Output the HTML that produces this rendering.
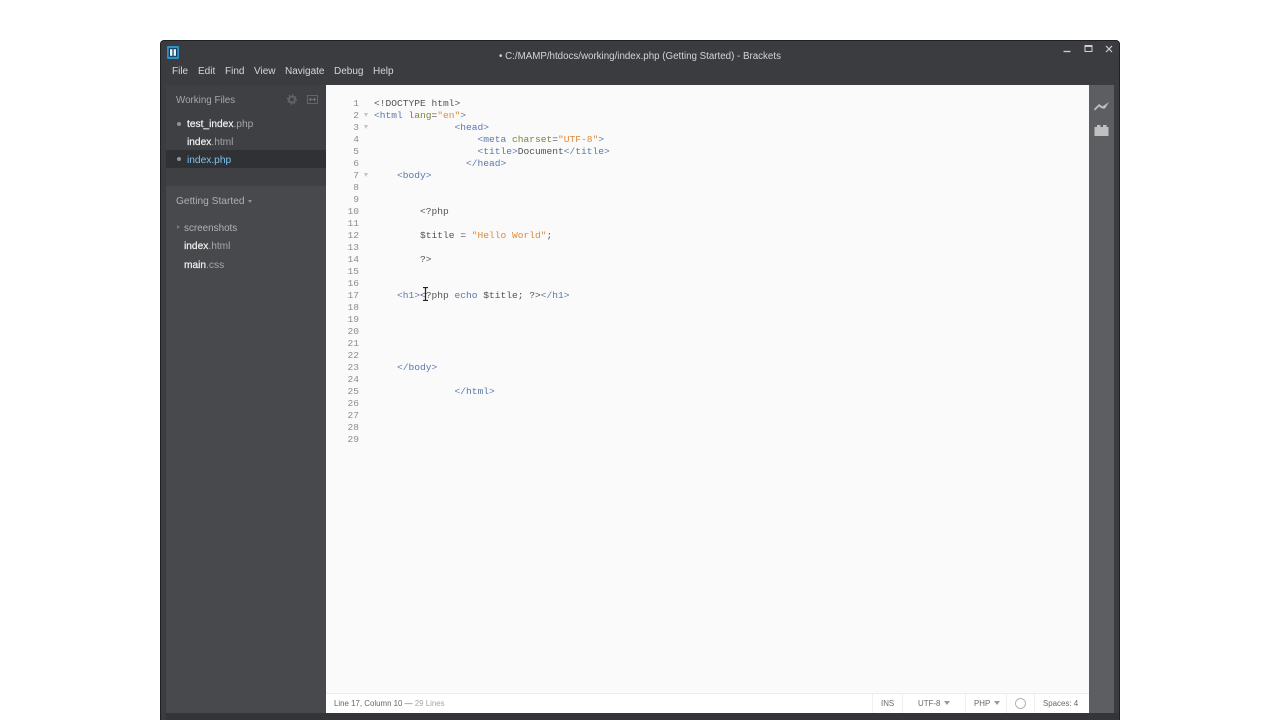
<!DOCTYPE html>
<html lang="en"><head><meta charset="utf-8"><title>Brackets</title>
<style>
html,body{margin:0;padding:0;width:1280px;height:720px;overflow:hidden;background:#fff}
div,span,pre{box-sizing:border-box}
.a{position:absolute}
.ui{font-family:"Liberation Sans",sans-serif;white-space:nowrap;filter:blur(.25px)}
#win{left:160px;top:40px;width:960px;height:680px;background:#1f2022;border-radius:4px 4px 0 0}
#chrome{left:161px;top:41px;width:958px;height:44px;background:#3a3c3f;border-radius:3px 3px 0 0}
#side{left:166px;top:85px;width:160px;height:628px;background:#47494c}
#wf{left:166px;top:85px;width:160px;height:101px;background:#3e4043}
#sel{left:166px;top:150px;width:160px;height:18px;background:#2f3134}
#ed{left:326px;top:85px;width:763px;height:628px;background:#fafafa}
#rb{left:1089px;top:85px;width:25px;height:628px;background:#5c5e61}
#rr{left:1114px;top:85px;width:5px;height:635px;background:#3a3c3f}
#bot{left:166px;top:713px;width:953px;height:7px;background:#333538}
#ls{left:161px;top:85px;width:5px;height:635px;background:#3a3c3f}
#st{left:326px;top:693px;width:763px;height:20px;background:#fff;border-top:1px solid #ececec}
.m{font-size:10px;color:#d5d6d7;top:66px}
.f{font-size:10.2px;color:#c9cacb}
.f b{font-weight:400;color:#f2f2f2;-webkit-text-stroke:.2px #f2f2f2}
.f i{font-style:normal;color:#a4a6a8}
.s{font-size:7.9px;color:#66686a;top:699px}
.sep{top:694px;width:1px;height:19px;background:#f0f0f0}
#gut,#code{font-family:"Liberation Mono",monospace;font-size:9.58px;line-height:12px;margin:0;top:98px;white-space:pre;filter:blur(.3px)}
#gut{left:340px;width:19px;text-align:right;color:#8d8d8d}
#code{left:374px;color:#535353}
.t{color:#5a78ae}.at{color:#75863a}.v{color:#dc8a3a}.k{color:#5a78ae}
.fold{left:364px;width:0;height:0;border-left:2.5px solid transparent;border-right:2.5px solid transparent;border-top:4px solid #c4c4c4}
</style></head><body>
<div class="a" id="win"></div>
<div class="a" id="chrome"></div>
<div class="a" id="ls"></div>
<div class="a" id="side"></div>
<div class="a" id="wf"></div>
<div class="a" id="sel"></div>
<div class="a" id="ed"></div>
<div class="a" id="rb"></div>
<div class="a" id="rr"></div>
<div class="a" id="bot"></div>

<svg class="a" style="left:167px;top:46px" width="12" height="13" viewBox="0 0 12 13"><rect width="12" height="13" rx="1" fill="#2f8fc6"/><rect x="1.800" y="2.200" width="8.400" height="8.600" fill="#0f3a57"/><rect x="3" y="3.200" width="2.400" height="6.600" fill="#e8f3f9"/><rect x="6.600" y="3.200" width="2.400" height="6.600" fill="#e8f3f9"/></svg>

<div class="a ui" style="left:499px;top:51px;font-size:9.75px;color:#d3d4d5">• C:/MAMP/htdocs/working/index.php (Getting Started) - Brackets</div>

<div class="a ui m" style="left:172px">File</div>
<div class="a ui m" style="left:198px">Edit</div>
<div class="a ui m" style="left:225px">Find</div>
<div class="a ui m" style="left:254px">View</div>
<div class="a ui m" style="left:285px">Navigate</div>
<div class="a ui m" style="left:334px">Debug</div>
<div class="a ui m" style="left:373px">Help</div>

<svg class="a" style="left:1060px;top:44px" width="56" height="12" viewBox="0 0 56 12" fill="none" stroke="#cfcfcf"><path d="M3.500 7.500H10.500" stroke-width="1.300"/><rect x="25" y="1.500" width="7" height="6" stroke-width="1"/><path d="M25 2.200H32" stroke-width="1.600"/><path d="M46 2L52 8M52 2L46 8" stroke-width="1.200"/></svg>

<div class="a ui" style="left:176px;top:95px;font-size:9.8px;color:#a5a7a9">Working Files</div>
<svg class="a" style="left:286px;top:94px" width="34" height="12" viewBox="0 0 34 12"><circle cx="6" cy="5.500" r="3" fill="none" stroke="#626467" stroke-width="2"/><circle cx="6" cy="5.500" r="4.600" fill="none" stroke="#626467" stroke-width="1.200" stroke-dasharray="1.500 2.100"/><rect x="21.500" y="1.500" width="10" height="8" fill="none" stroke="#626467"/><path d="M23.500 5.500H29.500M25 4L23.500 5.500L25 7M28 4L29.500 5.500L28 7" fill="none" stroke="#7a7c7f" stroke-width=".8"/></svg>

<div class="a" style="left:177px;top:122px;width:4px;height:4px;border-radius:50%;background:#8f9194"></div>
<div class="a ui f" style="left:187px;top:119px"><b>test_index</b><i>.php</i></div>
<div class="a ui f" style="left:187px;top:137px"><b>index</b><i>.html</i></div>
<div class="a" style="left:177px;top:157px;width:4px;height:4px;border-radius:50%;background:#8f9194"></div>
<div class="a ui" style="left:187px;top:155px;font-size:10.2px;color:#7fc3ee">index.php</div>

<div class="a ui" style="left:176px;top:196px;font-size:10.2px;color:#aeb0b2">Getting Started</div>
<div class="a" style="left:248px;top:200px;width:0;height:0;border-left:2px solid transparent;border-right:2px solid transparent;border-top:3px solid #8f9194"></div>
<div class="a" style="left:177px;top:225px;width:0;height:0;border-top:2.500px solid transparent;border-bottom:2.500px solid transparent;border-left:3.500px solid #77797c"></div>
<div class="a ui f" style="left:184px;top:223px;color:#b0b2b4;font-size:9.9px">screenshots</div>
<div class="a ui f" style="left:184px;top:241px"><b>index</b><i>.html</i></div>
<div class="a ui f" style="left:184px;top:260px"><b>main</b><i>.css</i></div>

<pre class="a" id="gut">1
2
3
4
5
6
7
8
9
10
11
12
13
14
15
16
17
18
19
20
21
22
23
24
25
26
27
28
29</pre>
<div class="a fold" style="top:113px"></div>
<div class="a fold" style="top:125px"></div>
<div class="a fold" style="top:173px"></div>
<pre class="a" id="code">&lt;!DOCTYPE html&gt;
<span class="t">&lt;html</span> <span class="at">lang</span>=<span class="v">"en"</span><span class="t">&gt;</span>
              <span class="t">&lt;head&gt;</span>
                  <span class="t">&lt;meta</span> <span class="at">charset</span>=<span class="v">"UTF-8"</span><span class="t">&gt;</span>
                  <span class="t">&lt;title&gt;</span>Document<span class="t">&lt;/title&gt;</span>
                <span class="t">&lt;/head&gt;</span>
    <span class="t">&lt;body&gt;</span>


        &lt;?php

        $title = <span class="v">"Hello World"</span>;

        ?&gt;


    <span class="t">&lt;h1&gt;</span>&lt;?php <span class="k">echo</span> $title; ?&gt;<span class="t">&lt;/h1&gt;</span>





    <span class="t">&lt;/body&gt;</span>

              <span class="t">&lt;/html&gt;</span></pre>
<svg class="a" style="left:421px;top:287px" width="9" height="14" viewBox="0 0 9 14" fill="none" stroke="#222"><path d="M2 .5H7M4.500 .5V13M2 13.500H7" stroke-width="1.200"/></svg>

<svg class="a" style="left:1093px;top:98px" width="18" height="40" viewBox="0 0 18 40"><path d="M1 11L6 6L9.500 8.500L16 4L12 10.500L9 10.500L6 8.500L2 12.500Z" fill="#bfc0c1"/><path d="M1.500 29H4V27H7.500V29H10V27H13.500V29H15.500V38H1.500Z" fill="#bfc0c1"/></svg>

<div class="a" id="st"></div>
<div class="a ui s" style="left:334px">Line 17, Column 10 — <span style="color:#a5a5a5">29 Lines</span></div>
<div class="a sep" style="left:872px"></div>
<div class="a ui s" style="left:881px">INS</div>
<div class="a sep" style="left:902px"></div>
<div class="a ui s" style="left:918px">UTF-8</div>
<div class="a" style="left:944px;top:701px;width:0;height:0;border-left:3px solid transparent;border-right:3px solid transparent;border-top:4px solid #9a9a9a"></div>
<div class="a sep" style="left:965px"></div>
<div class="a ui s" style="left:974px">PHP</div>
<div class="a" style="left:994px;top:701px;width:0;height:0;border-left:3px solid transparent;border-right:3px solid transparent;border-top:4px solid #9a9a9a"></div>
<div class="a sep" style="left:1006px"></div>
<div class="a" style="left:1015px;top:698px;width:11px;height:11px;border-radius:50%;border:1px solid #b4b4b4"></div>
<div class="a sep" style="left:1034px"></div>
<div class="a ui s" style="left:1043px">Spaces: 4</div>
</body></html>
